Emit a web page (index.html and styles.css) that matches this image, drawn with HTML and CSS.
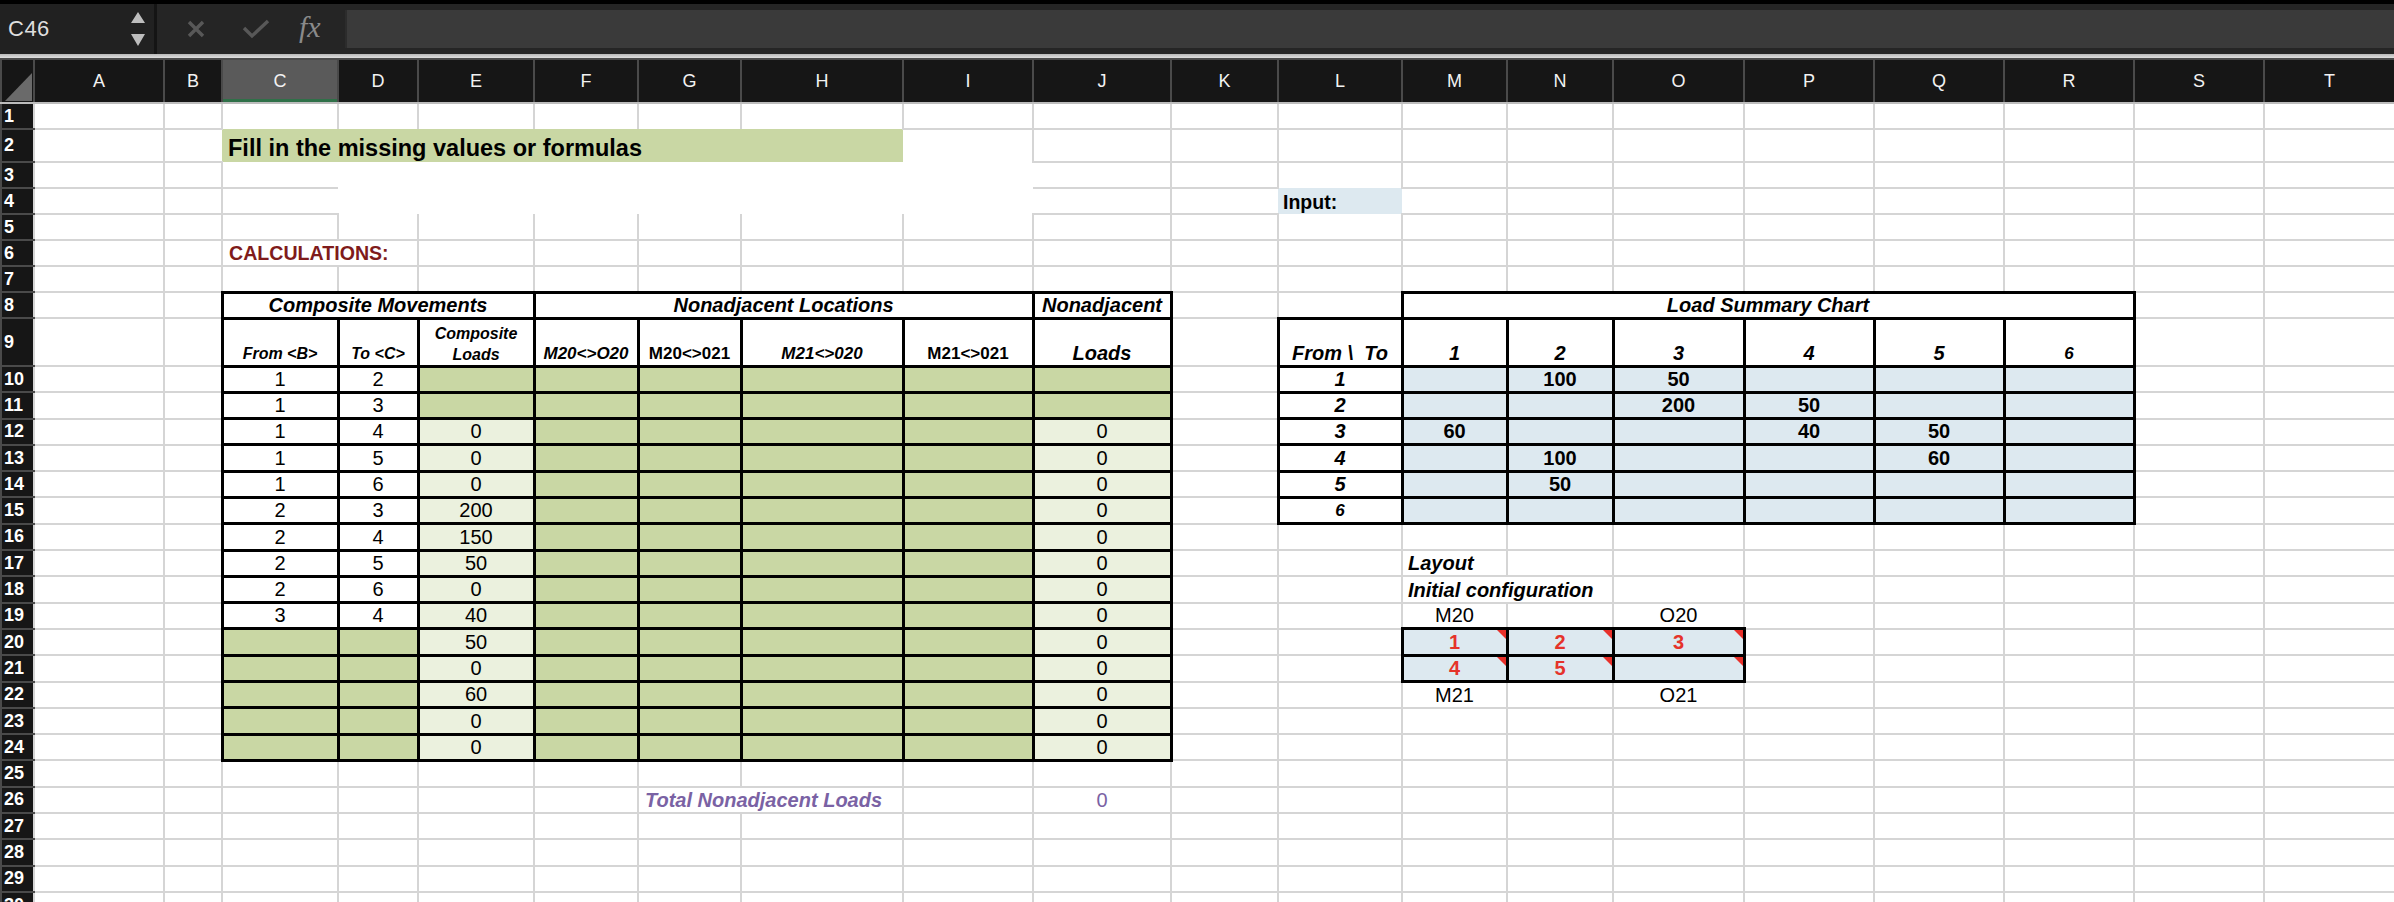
FILE: index.html
```html
<!DOCTYPE html>
<html>
<head>
<meta charset="utf-8">
<title>Sheet</title>
<link rel="stylesheet" href="styles.css">
</head>
<body>
<div class="app">
  <div class="toolbar">
    <div class="namebox">
      <span class="ref">C46</span>
      <svg class="spin" width="16" height="36" viewBox="0 0 16 36"><path d="M8 1 L15 12 L1 12 Z M1 23 L15 23 L8 35 Z" fill="#bdbdbd"/></svg>
    </div>
    <div class="tools">
      <svg class="ico-x" width="20" height="20" viewBox="0 0 20 20"><path d="M3 3 L17 17 M17 3 L3 17" stroke="#585858" stroke-width="3.4" fill="none"/></svg>
      <svg class="ico-ok" width="28" height="20" viewBox="0 0 28 20"><path d="M2 9 L10 17 L26 2" stroke="#585858" stroke-width="3.4" fill="none"/></svg>
      <span class="fx">fx</span>
    </div>
    <div class="formula"></div>
  </div>
  <div class="tbline"></div>

  <table class="sheet">
    <colgroup>
      <col class="w-rh"><col class="w-a"><col class="w-b"><col class="w-c"><col class="w-d"><col class="w-e"><col class="w-f"><col class="w-g"><col class="w-h"><col class="w-i"><col class="w-j"><col class="w-k"><col class="w-l"><col class="w-m"><col class="w-n"><col class="w-o"><col class="w-p"><col class="w-q"><col class="w-r"><col class="w-s"><col class="w-t">
    </colgroup>
    <thead>
      <tr class="hdr">
        <th class="corner"><svg width="28" height="30" viewBox="0 0 28 30"><path d="M27 1 L27 29 L0 29 Z" fill="#6a6a6a"/></svg></th>
        <th>A</th><th>B</th><th class="sel">C</th><th>D</th><th>E</th><th>F</th><th>G</th><th>H</th><th>I</th><th>J</th><th>K</th><th>L</th><th>M</th><th>N</th><th>O</th><th>P</th><th>Q</th><th>R</th><th>S</th><th>T</th>
      </tr>
    </thead>
    <tbody>
      <tr><th class="rh">1</th><td></td><td></td><td></td><td></td><td></td><td></td><td></td><td></td><td></td><td></td><td></td><td></td><td></td><td></td><td></td><td></td><td></td><td></td><td></td><td></td></tr>
      <tr class="r2"><th class="rh">2</th><td></td><td></td><td colspan="6" class="g hid title">Fill in the missing values or formulas</td><td></td><td></td><td></td><td></td><td></td><td></td><td></td><td></td><td></td><td></td><td></td><td></td></tr>
      <tr><th class="rh">3</th><td></td><td></td><td></td><td colspan="6" rowspan="2" class="hid"></td><td></td><td></td><td></td><td></td><td></td><td></td><td></td><td></td><td></td><td></td><td></td></tr>
      <tr><th class="rh">4</th><td></td><td></td><td></td><td></td><td></td><td class="bl hid bo input">Input:</td><td></td><td></td><td></td><td></td><td></td><td></td><td></td><td></td></tr>
      <tr><th class="rh">5</th><td></td><td></td><td></td><td></td><td></td><td></td><td></td><td></td><td></td><td></td><td></td><td></td><td></td><td></td><td></td><td></td><td></td><td></td><td></td><td></td></tr>
      <tr><th class="rh">6</th><td></td><td></td><td colspan="2" class="calc">CALCULATIONS:</td><td></td><td></td><td></td><td></td><td></td><td></td><td></td><td></td><td></td><td></td><td></td><td></td><td></td><td></td><td></td><td></td></tr>
      <tr><th class="rh">7</th><td></td><td></td><td></td><td></td><td></td><td></td><td></td><td></td><td></td><td></td><td></td><td></td><td></td><td></td><td></td><td></td><td></td><td></td><td></td><td></td></tr>
      <tr><th class="rh">8</th><td></td><td></td>
        <td colspan="3" class="k c bi">Composite Movements</td>
        <td colspan="4" class="k c bi">Nonadjacent Locations</td>
        <td class="k c bi">Nonadjacent</td>
        <td></td><td></td>
        <td colspan="6" class="k c bi">Load Summary Chart</td>
        <td></td><td></td></tr>
      <tr class="r9"><th class="rh">9</th><td></td><td></td>
        <td class="k c bi sm">From &lt;B&gt;</td>
        <td class="k c bi sm">To &lt;C&gt;</td>
        <td class="k c bi sm two">Composite<br>Loads</td>
        <td class="k c bi md">M20&lt;&gt;O20</td>
        <td class="k c bo md">M20&lt;&gt;021</td>
        <td class="k c bi md">M21&lt;&gt;020</td>
        <td class="k c bo md">M21&lt;&gt;021</td>
        <td class="k c bi">Loads</td>
        <td></td>
        <td class="k c bi">From \&nbsp; To</td>
        <td class="k c bi">1</td><td class="k c bi">2</td><td class="k c bi">3</td><td class="k c bi">4</td><td class="k c bi">5</td><td class="k c bi six">6</td>
        <td></td><td></td></tr>
      <tr class="t"><th class="rh">10</th><td></td><td></td>
        <td class="k c">1</td><td class="k c">2</td><td class="k g"></td><td class="k g"></td><td class="k g"></td><td class="k g"></td><td class="k g"></td><td class="k g"></td>
        <td></td>
        <td class="k c bi">1</td><td class="k c bo bl"></td><td class="k c bo bl">100</td><td class="k c bo bl">50</td><td class="k c bo bl"></td><td class="k c bo bl"></td><td class="k c bo bl"></td>
        <td></td><td></td></tr>
      <tr class="t"><th class="rh">11</th><td></td><td></td>
        <td class="k c">1</td><td class="k c">3</td><td class="k g"></td><td class="k g"></td><td class="k g"></td><td class="k g"></td><td class="k g"></td><td class="k g"></td>
        <td></td>
        <td class="k c bi">2</td><td class="k c bo bl"></td><td class="k c bo bl"></td><td class="k c bo bl">200</td><td class="k c bo bl">50</td><td class="k c bo bl"></td><td class="k c bo bl"></td>
        <td></td><td></td></tr>
      <tr class="t"><th class="rh">12</th><td></td><td></td>
        <td class="k c">1</td><td class="k c">4</td><td class="k c lg">0</td><td class="k g"></td><td class="k g"></td><td class="k g"></td><td class="k g"></td><td class="k c lg">0</td>
        <td></td>
        <td class="k c bi">3</td><td class="k c bo bl">60</td><td class="k c bo bl"></td><td class="k c bo bl"></td><td class="k c bo bl">40</td><td class="k c bo bl">50</td><td class="k c bo bl"></td>
        <td></td><td></td></tr>
      <tr class="t"><th class="rh">13</th><td></td><td></td>
        <td class="k c">1</td><td class="k c">5</td><td class="k c lg">0</td><td class="k g"></td><td class="k g"></td><td class="k g"></td><td class="k g"></td><td class="k c lg">0</td>
        <td></td>
        <td class="k c bi">4</td><td class="k c bo bl"></td><td class="k c bo bl">100</td><td class="k c bo bl"></td><td class="k c bo bl"></td><td class="k c bo bl">60</td><td class="k c bo bl"></td>
        <td></td><td></td></tr>
      <tr class="t"><th class="rh">14</th><td></td><td></td>
        <td class="k c">1</td><td class="k c">6</td><td class="k c lg">0</td><td class="k g"></td><td class="k g"></td><td class="k g"></td><td class="k g"></td><td class="k c lg">0</td>
        <td></td>
        <td class="k c bi">5</td><td class="k c bo bl"></td><td class="k c bo bl">50</td><td class="k c bo bl"></td><td class="k c bo bl"></td><td class="k c bo bl"></td><td class="k c bo bl"></td>
        <td></td><td></td></tr>
      <tr class="t"><th class="rh">15</th><td></td><td></td>
        <td class="k c">2</td><td class="k c">3</td><td class="k c lg">200</td><td class="k g"></td><td class="k g"></td><td class="k g"></td><td class="k g"></td><td class="k c lg">0</td>
        <td></td>
        <td class="k c bi six">6</td><td class="k c bo bl"></td><td class="k c bo bl"></td><td class="k c bo bl"></td><td class="k c bo bl"></td><td class="k c bo bl"></td><td class="k c bo bl"></td>
        <td></td><td></td></tr>
      <tr class="t"><th class="rh">16</th><td></td><td></td>
        <td class="k c">2</td><td class="k c">4</td><td class="k c lg">150</td><td class="k g"></td><td class="k g"></td><td class="k g"></td><td class="k g"></td><td class="k c lg">0</td>
        <td></td><td></td><td></td><td></td><td></td><td></td><td></td><td></td><td></td><td></td></tr>
      <tr class="t"><th class="rh">17</th><td></td><td></td>
        <td class="k c">2</td><td class="k c">5</td><td class="k c lg">50</td><td class="k g"></td><td class="k g"></td><td class="k g"></td><td class="k g"></td><td class="k c lg">0</td>
        <td></td><td></td><td class="bi">Layout</td><td></td><td></td><td></td><td></td><td></td><td></td><td></td></tr>
      <tr class="t"><th class="rh">18</th><td></td><td></td>
        <td class="k c">2</td><td class="k c">6</td><td class="k c lg">0</td><td class="k g"></td><td class="k g"></td><td class="k g"></td><td class="k g"></td><td class="k c lg">0</td>
        <td></td><td></td><td colspan="2" class="bi">Initial configuration</td><td></td><td></td><td></td><td></td><td></td><td></td></tr>
      <tr class="t"><th class="rh">19</th><td></td><td></td>
        <td class="k c">3</td><td class="k c">4</td><td class="k c lg">40</td><td class="k g"></td><td class="k g"></td><td class="k g"></td><td class="k g"></td><td class="k c lg">0</td>
        <td></td><td></td><td class="c">M20</td><td></td><td class="c">O20</td><td></td><td></td><td></td><td></td><td></td></tr>
      <tr class="t"><th class="rh">20</th><td></td><td></td>
        <td class="k g"></td><td class="k g"></td><td class="k c lg">50</td><td class="k g"></td><td class="k g"></td><td class="k g"></td><td class="k g"></td><td class="k c lg">0</td>
        <td></td><td></td><td class="k c bl red note">1</td><td class="k c bl red note">2</td><td class="k c bl red note">3</td><td></td><td></td><td></td><td></td><td></td></tr>
      <tr class="t"><th class="rh">21</th><td></td><td></td>
        <td class="k g"></td><td class="k g"></td><td class="k c lg">0</td><td class="k g"></td><td class="k g"></td><td class="k g"></td><td class="k g"></td><td class="k c lg">0</td>
        <td></td><td></td><td class="k c bl red note">4</td><td class="k c bl red note">5</td><td class="k c bl red note"></td><td></td><td></td><td></td><td></td><td></td></tr>
      <tr class="t"><th class="rh">22</th><td></td><td></td>
        <td class="k g"></td><td class="k g"></td><td class="k c lg">60</td><td class="k g"></td><td class="k g"></td><td class="k g"></td><td class="k g"></td><td class="k c lg">0</td>
        <td></td><td></td><td class="c">M21</td><td></td><td class="c">O21</td><td></td><td></td><td></td><td></td><td></td></tr>
      <tr class="t"><th class="rh">23</th><td></td><td></td>
        <td class="k g"></td><td class="k g"></td><td class="k c lg">0</td><td class="k g"></td><td class="k g"></td><td class="k g"></td><td class="k g"></td><td class="k c lg">0</td>
        <td></td><td></td><td></td><td></td><td></td><td></td><td></td><td></td><td></td><td></td></tr>
      <tr class="t"><th class="rh">24</th><td></td><td></td>
        <td class="k g"></td><td class="k g"></td><td class="k c lg">0</td><td class="k g"></td><td class="k g"></td><td class="k g"></td><td class="k g"></td><td class="k c lg">0</td>
        <td></td><td></td><td></td><td></td><td></td><td></td><td></td><td></td><td></td><td></td></tr>
      <tr class="t"><th class="rh">25</th><td></td><td></td><td></td><td></td><td></td><td></td><td></td><td></td><td></td><td></td><td></td><td></td><td></td><td></td><td></td><td></td><td></td><td></td><td></td><td></td></tr>
      <tr class="t"><th class="rh">26</th><td></td><td></td><td></td><td></td><td></td><td></td><td colspan="2" class="bi pur total">Total Nonadjacent Loads</td><td></td><td class="c pur">0</td><td></td><td></td><td></td><td></td><td></td><td></td><td></td><td></td><td></td><td></td></tr>
      <tr class="t"><th class="rh">27</th><td></td><td></td><td></td><td></td><td></td><td></td><td></td><td></td><td></td><td></td><td></td><td></td><td></td><td></td><td></td><td></td><td></td><td></td><td></td><td></td></tr>
      <tr class="t"><th class="rh">28</th><td></td><td></td><td></td><td></td><td></td><td></td><td></td><td></td><td></td><td></td><td></td><td></td><td></td><td></td><td></td><td></td><td></td><td></td><td></td><td></td></tr>
      <tr class="t"><th class="rh">29</th><td></td><td></td><td></td><td></td><td></td><td></td><td></td><td></td><td></td><td></td><td></td><td></td><td></td><td></td><td></td><td></td><td></td><td></td><td></td><td></td></tr>
      <tr class="t"><th class="rh">30</th><td></td><td></td><td></td><td></td><td></td><td></td><td></td><td></td><td></td><td></td><td></td><td></td><td></td><td></td><td></td><td></td><td></td><td></td><td></td><td></td></tr>
    </tbody>
  </table>
</div>
</body>
</html>
```

FILE: styles.css
```css
html, body {
  margin: 0;
  padding: 0;
  height: 902px;
  overflow: hidden;
  background: #ffffff;
  font-family: "Liberation Sans", Arial, sans-serif;
}

.app {
  width: 2394px;
  height: 902px;
  overflow: hidden;
}

/* ---------- formula toolbar ---------- */
.toolbar {
  display: flex;
  height: 50px;
  border-top: 4px solid #000000;
  background: #252525;
}

.namebox {
  width: 157px;
  box-sizing: border-box;
  display: flex;
  align-items: center;
  justify-content: space-between;
  padding: 0 8px 0 8px;
  background: #212121;
  border-right: 3px solid #141414;
}

.ref {
  color: #dedede;
  font-size: 22px;
  letter-spacing: 0.5px;
}

.tools {
  display: flex;
  align-items: center;
  width: 188px;
  box-sizing: border-box;
  padding-left: 29px;
}

.ico-x { margin-right: 36px; }
.ico-ok { margin-right: 29px; }

.fx {
  font-family: "Liberation Serif", "Times New Roman", serif;
  font-style: italic;
  font-size: 30px;
  color: #8a8a8a;
  line-height: 1;
  margin-top: -4px;
}

.formula {
  flex: 1;
  margin: 6px 0;
  background: #3a3a3a;
  border-left: 2px solid #2c2c2c;
}

.tbline {
  height: 4px;
  background: linear-gradient(#b8b8b8, #dedede);
}

/* ---------- sheet grid ---------- */
.sheet {
  border-collapse: collapse;
  table-layout: fixed;
  width: 2394px;
}

.w-rh { width: 33px; }
.w-a { width: 130px; }
.w-b { width: 58px; }
.w-c { width: 116px; }
.w-d { width: 80px; }
.w-e { width: 116px; }
.w-f { width: 104px; }
.w-g { width: 103px; }
.w-h { width: 162px; }
.w-i { width: 130px; }
.w-j { width: 138px; }
.w-k { width: 107px; }
.w-l { width: 124px; }
.w-m { width: 105px; }
.w-n { width: 106px; }
.w-o { width: 131px; }
.w-p { width: 130px; }
.w-q { width: 130px; }
.w-r { width: 130px; }
.w-s { width: 130px; }
.w-t { width: 131px; }

.sheet tr { height: 26px; }
.sheet tr.hdr { height: 44px; }
.sheet tr.r2 { height: 33px; }
.sheet tr.r9 { height: 48px; }
.sheet tr.t { height: 26.3px; }

.sheet th {
  background: #161616;
  color: #f2f2f2;
  font-weight: normal;
  font-size: 18px;
  border: 2px solid #4a4a4a;
  padding: 0;
  vertical-align: middle;
  overflow: hidden;
}

.sheet thead th {
  border-bottom-color: #bdbdbd;
}

.sheet th.sel {
  background: #5a5a5a;
  box-shadow: inset 0 -3px 0 #2f7048;
}

.sheet th.corner {
  text-align: right;
  vertical-align: bottom;
  line-height: 0;
}

.sheet th.rh {
  text-align: left;
  padding-left: 2px;
  font-weight: bold;
  color: #ffffff;
  border-right-color: #d5d5d5;
}

.sheet td {
  border: 2px solid #d5d5d5;
  padding: 0 5px;
  white-space: nowrap;
  overflow: hidden;
  font-size: 20px;
  line-height: 23px;
  vertical-align: bottom;
  color: #000000;
}

.sheet td.k { border: 3px solid #000000; }
.sheet td.hid { border-style: hidden; }

.c { text-align: center; }
.bi { font-weight: bold; font-style: italic; }
.bo { font-weight: bold; }
.sheet td.sm { font-size: 16px; }
.sheet td.md { font-size: 17px; }
.sheet td.six { font-size: 17px; }
.sheet td.two { line-height: 21px; }

.g { background: #c9d7a4; }
.lg { background: #ebf1de; }
.bl { background: #dde9f0; }

.sheet td.title {
  font-size: 23.5px;
  font-weight: bold;
  padding-left: 6px;
  padding-bottom: 2px;
}

.sheet td.calc {
  font-size: 19.6px;
  font-weight: bold;
  color: #7f1b1b;
  padding-left: 6px;
}

.sheet td.input {
  font-size: 19.5px;
}

.sheet td.red {
  color: #e5332a;
  font-weight: bold;
}

.sheet td.pur { color: #7a62a4; }

.sheet td.total { padding-left: 6px; }

.note { position: relative; }
.note::after {
  content: "";
  position: absolute;
  top: 0;
  right: 0;
  width: 0;
  height: 0;
  border-style: solid;
  border-width: 0 9px 9px 0;
  border-color: transparent #e8302a transparent transparent;
}
```
